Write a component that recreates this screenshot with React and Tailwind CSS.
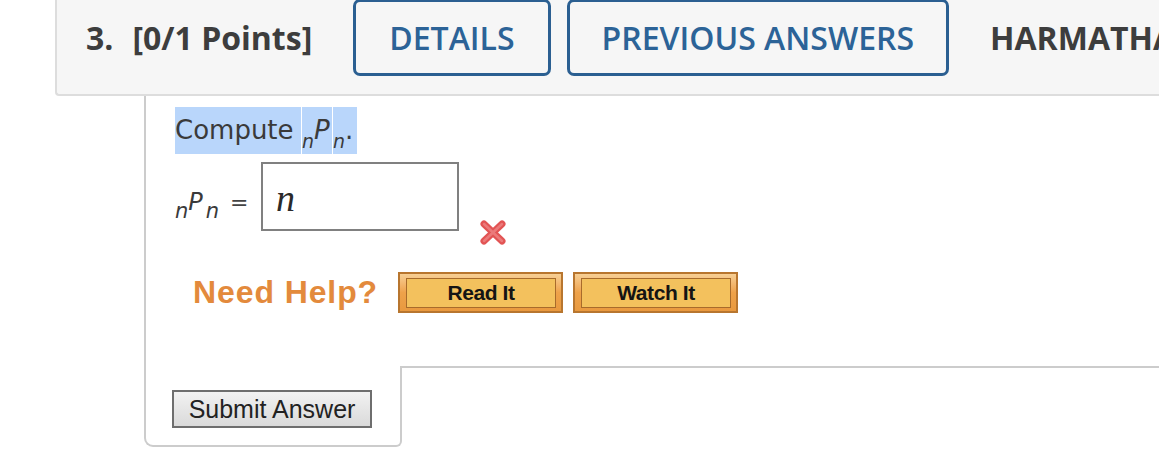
import React from "react";

const HelpButton = ({ label }) => (
  <div className="w-[165px] h-[41px] border-2 border-[#b8762f] bg-gradient-to-b from-[#f7cf94] via-[#eea24a] to-[#e9993f] pt-[4px] pl-[6px] pr-[5px] pb-[3px]">
    <div className="h-full border border-[#a86b2b] bg-[#f3c15d] flex items-center justify-center text-[21px] font-bold text-[#141414] tracking-[-0.4px] font-['Liberation_Sans',Arial,sans-serif]">
      {label}
    </div>
  </div>
);

const RedX = () => (
  <svg width="28" height="27" viewBox="0 0 28 27">
    <path d="M5 5 L23 22 M23 5 L5 22" stroke="#e25454" strokeWidth="7" strokeLinecap="round" fill="none" />
    <path d="M5 5 L23 22 M23 5 L5 22" stroke="#f08a8a" strokeWidth="2.5" strokeLinecap="round" fill="none" opacity="0.7" />
  </svg>
);

export default function App() {
  return (
    <div className="w-[1159px] h-[472px] overflow-hidden bg-white whitespace-nowrap">
      {/* Question header */}
      <div className="ml-[55px] w-[1160px] h-[96px] bg-[#f6f6f6] border-l-2 border-b-2 border-[#dddddd] rounded-bl-[4px] flex items-center pb-[19px] pl-[29px] font-['Open_Sans',sans-serif]">
        <span className="text-[32px] font-bold text-[#3d3d3d]">
          3.<span className="ml-[19px]">[0/1 Points]</span>
        </span>
        <button className="ml-[41px] h-[77px] px-[33px] border-[3px] border-[#2b5f91] rounded-[7px] text-[32px] font-semibold text-[#2c6397]">
          DETAILS
        </button>
        <button className="ml-[16px] h-[77px] px-[32px] border-[3px] border-[#2b5f91] rounded-[7px] text-[32px] font-semibold text-[#2c6397]">
          PREVIOUS ANSWERS
        </button>
        <span className="ml-[41px] text-[32px] font-bold text-[#3d3d3d]">HARMATHA</span>
      </div>

      {/* Question body */}
      <div className="ml-[144px] flex flex-col">
        <div className="h-[270px] border-l-2 border-[#cccccc] pl-[29px] pt-[11px] font-['DejaVu_Sans',sans-serif] text-[#3a3a3a]">
          <div className="flex gap-[1px] h-[47px] leading-[47px] text-[26px]">
            <span className="bg-[#b9d6fb] w-[126px]">Compute</span>
            <span className="bg-[#b9d6fb] w-[30px] flex items-baseline">
              <span className="italic text-[19px] relative top-[9px]">n</span>
              <span className="italic">P</span>
            </span>
            <span className="bg-[#b9d6fb] w-[24px] flex items-baseline">
              <span className="italic text-[19px] relative top-[9px]">n</span>
              <span>.</span>
            </span>
          </div>

          <div className="mt-[8px] flex items-start">
            <div className="mt-[22px] w-[86px] flex items-baseline">
              <span className="italic text-[21px] relative top-[8px]">n</span>
              <span className="italic text-[24px]">P</span>
              <span className="italic text-[21px] relative top-[8px] ml-[3px]">n</span>
              <span className="text-[22px] ml-[11px] text-[#444]">=</span>
            </div>
            <div className="w-[198px] h-[69px] border-2 border-[#808080] pl-[13px] pt-[6px] text-[38px] italic text-[#2a2a2a] font-['Liberation_Serif',serif]">
              n
            </div>
            <div className="ml-[20px] mt-[57px]">
              <RedX />
            </div>
          </div>

          <div className="mt-[22px] ml-[18px] flex items-center gap-[10px]">
            <span className="mr-[10px] text-[32px] font-bold text-[#e38a3c] font-['Liberation_Sans',Arial,sans-serif] tracking-[0.9px]">
              Need Help?
            </span>
            <HelpButton label="Read It" />
            <HelpButton label="Watch It" />
          </div>
        </div>

        <div className="flex">
          <div className="w-[258px] h-[81px] border-l-2 border-r-2 border-b-2 border-[#cccccc] rounded-bl-[9px] rounded-br-[6px] pl-[26px] pt-[24px]">
            <button className="w-[200px] h-[38px] border-2 border-[#6e6e6e] bg-gradient-to-b from-[#f2f2f2] to-[#dadada] text-[25px] leading-none text-[#222] font-['Liberation_Sans',Arial,sans-serif]">
              Submit Answer
            </button>
          </div>
          <div className="flex-1 border-t-2 border-[#cccccc]" />
        </div>
      </div>
    </div>
  );
}
